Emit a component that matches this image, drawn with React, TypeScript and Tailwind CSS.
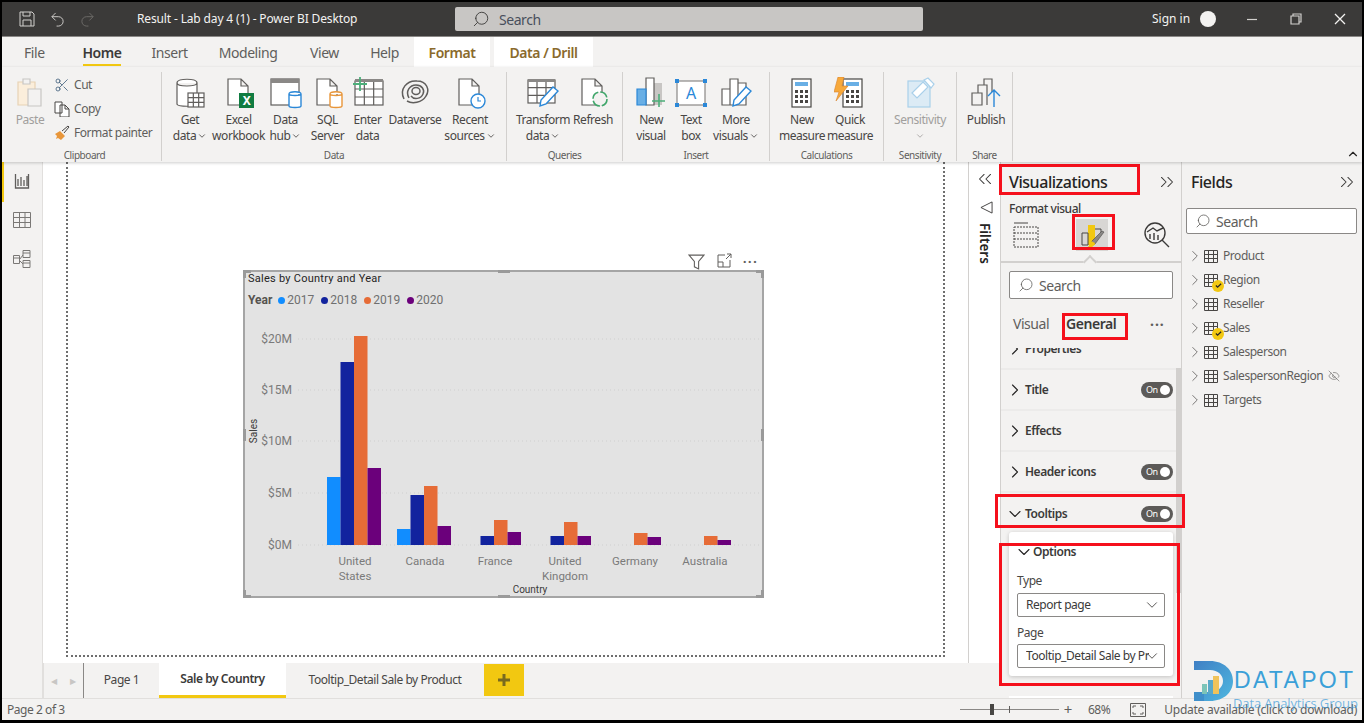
import type { ReactNode } from "react";
import { ChevronDown, ChevronRight, ChevronsLeft, ChevronsRight, ChevronUp, EyeOff, Scissors, Search } from "lucide-react";

const GREY = "#605e5c";

function Ico({ children, className = "w-[32px] h-[32px]" }: { children: ReactNode; className?: string }) {
  return (
    <svg viewBox="0 0 32 32" fill="none" stroke={GREY} strokeWidth="1.2" className={className}>
      {children}
    </svg>
  );
}

const Page = () => <path d="M5 2h13l7 7v19H5z M18 2v7h7" fill="#fff" />;

const Grid = ({ x, y, w, h }: { x: number; y: number; w: number; h: number }) => (
  <g>
    <rect x={x} y={y} width={w} height={h} fill="#fff" />
    <path d={`M${x} ${y + h / 3}h${w}M${x} ${y + (2 * h) / 3}h${w}M${x + w / 3} ${y}v${h}M${x + (2 * w) / 3} ${y}v${h}`} />
  </g>
);

const Pencil = () => <path d="M13 29l1-6L26 10l5 4-12 13z" fill="#fff" stroke="#2b88d8" strokeWidth="1.4" />;

const Calc = ({ x }: { x: number }) => (
  <g>
    <rect x={x} y="2" width="19" height="28" fill="#fff" stroke="#484644" />
    <rect x={x + 3} y="5" width="13" height="4" fill="#69afe5" stroke="none" />
    <path
      d={`M${x + 3} 13h3v3h-3zM${x + 8} 13h3v3h-3zM${x + 13} 13h3v3h-3zM${x + 3} 18h3v3h-3zM${x + 8} 18h3v3h-3zM${x + 13} 18h3v3h-3zM${x + 3} 23h3v3h-3zM${x + 8} 23h3v3h-3zM${x + 13} 23h3v3h-3z`}
      fill="#484644"
      stroke="none"
    />
  </g>
);

function Tool({ icon, lines, caret, w, dim }: { icon: ReactNode; lines: string[]; caret?: boolean; w: string; dim?: boolean }) {
  return (
    <div className={`flex flex-col items-center pt-[5px] ${w}`}>
      <div className="h-[32px]">{icon}</div>
      <div className={`mt-[3px] text-center text-[12px] leading-[16px] whitespace-nowrap ${dim ? "text-[#a19f9d]" : "text-[#484644]"}`}>
        {lines.map((l, i) => (
          <div key={l} className="flex h-[16px] items-center justify-center">
            {l}
            {caret && i === lines.length - 1 && <ChevronDown className="ml-[1px] h-[10px] w-[10px]" strokeWidth={2} />}
          </div>
        ))}
      </div>
    </div>
  );
}

function Group({ label, w, children }: { label: string; w: string; children: ReactNode }) {
  return (
    <div className={`mb-[1px] mt-[5px] flex flex-col border-r border-[#d2d0ce] ${w}`}>
      <div className="flex flex-1">{children}</div>
      <div className="text-center text-[10px] leading-[12px] text-[#605e5c]">{label}</div>
    </div>
  );
}

function Toggle() {
  return (
    <div className="flex h-[16px] w-[32px] items-center justify-between rounded-full bg-[#5c5a58] pl-[5px] pr-[3px]">
      <span className="text-[9px] leading-none text-white">On</span>
      <span className="h-[10px] w-[10px] rounded-full bg-white" />
    </div>
  );
}

function SearchBox({ className }: { className: string }) {
  return (
    <div className={`flex items-center gap-[5px] rounded-[2px] border border-[#8a8886] bg-white pl-[8px] ${className}`}>
      <Search className="h-[16px] w-[16px] -scale-x-100 text-[#605e5c]" strokeWidth={1.2} />
      <span className="text-[14px] text-[#605e5c]">Search</span>
    </div>
  );
}

function Section({ label, toggle, open }: { label: string; toggle?: boolean; open?: boolean }) {
  return (
    <div className={`flex h-[41px] shrink-0 items-center pl-[4px] pr-[3px] ${open ? "" : "border-t-2 border-[#ecebea]"}`}>
      {open ? (
        <ChevronDown className="h-[20px] w-[20px] text-[#252423]" strokeWidth={1.3} />
      ) : (
        <ChevronRight className="h-[20px] w-[20px] text-[#252423]" strokeWidth={1.3} />
      )}
      <span className="text-[12px] font-semibold text-[#3b3a39]">{label}</span>
      {toggle && (
        <div className="ml-auto">
          <Toggle />
        </div>
      )}
    </div>
  );
}

function Select({ text }: { text: string }) {
  return (
    <div className="relative h-[24px] rounded-[2px] border border-[#8a8886] bg-white pl-[8px] text-[12px] leading-[22px] whitespace-nowrap text-[#3b3a39]">
      <div className="mr-[15px] overflow-hidden">{text}</div>
      <span className="absolute right-[3px] top-0 flex h-full items-center">
        <ChevronDown className="h-[18px] w-[18px] text-[#484644]" strokeWidth={1.2} />
      </span>
    </div>
  );
}

function FieldRow({ name, used, hidden }: { name: string; used?: boolean; hidden?: boolean }) {
  return (
    <div className="flex h-[24px] items-center pl-[4px]">
      <ChevronRight className="h-[18px] w-[18px] text-[#605e5c]" strokeWidth={1.1} />
      <div className="relative h-[13px] w-[14px]">
        <svg viewBox="0 0 14 13" fill="none" stroke="#484644" className="h-[13px] w-[14px]">
          <path d="M.5.5h13v12H.5zM.5 4.5h13M.5 8.5h13M4.5.5v12M9.5.5v12" />
        </svg>
        {used && (
          <span className="absolute left-[8px] top-[6px] flex h-[12px] w-[12px] items-center justify-center rounded-full bg-[#f2c811]">
            <svg viewBox="0 0 8 8" fill="none" stroke="#252423" strokeWidth="1.4" className="h-[7px] w-[7px]">
              <path d="M1 4l2 2 4-4" />
            </svg>
          </span>
        )}
      </div>
      <span className="ml-[5px] text-[12px] text-[#605e5c]">{name}</span>
      {hidden && <EyeOff className="ml-[5px] h-[12px] w-[12px] text-[#605e5c]" strokeWidth={1.2} />}
    </div>
  );
}

const YEARS = [
  { y: "2017", c: "#118dff", dot: "bg-[#118dff]" },
  { y: "2018", c: "#12239e", dot: "bg-[#12239e]" },
  { y: "2019", c: "#e66c37", dot: "bg-[#e66c37]" },
  { y: "2020", c: "#6b007b", dot: "bg-[#6b007b]" },
];

// bar tops in page px, baseline is 545
const BARS: (number | null)[][] = [
  [477, 362, 336, 468],
  [529, 495, 486, 526],
  [null, 536, 520, 532],
  [null, 536, 522, 536],
  [null, null, 533, 537],
  [null, null, 536, 540],
];

const COUNTRIES = [["United", "States"], ["Canada"], ["France"], ["United", "Kingdom"], ["Germany"], ["Australia"]];

function Plot() {
  return (
    <svg viewBox="0 0 517 287" className="h-[287px] w-[517px]">
      <g transform="translate(-245 -309)">
        {[
          ["$20M", 339],
          ["$15M", 390],
          ["$10M", 441],
          ["$5M", 493],
          ["$0M", 545],
        ].map(([t, y]) => (
          <g key={t}>
            <line x1="298" x2="760" y1={y} y2={y} stroke="#cfcfcf" strokeDasharray="1 3" />
            <text x="292" y={Number(y) + 4} textAnchor="end" fontSize="12" fill="#7a7a7a">
              {t}
            </text>
          </g>
        ))}
        {BARS.map((g, i) =>
          g.map((top, j) =>
            top === null ? null : (
              <rect key={`${i}-${j}`} x={327 + i * 70 + j * 13.5} y={top} width="13.5" height={545 - top} fill={YEARS[j].c} />
            ),
          ),
        )}
        {COUNTRIES.map((lines, i) =>
          lines.map((l, k) => (
            <text key={l + i} x={355 + i * 70} y={565 + k * 15} textAnchor="middle" fontSize="11.5" fill="#7a7a7a">
              {l}
            </text>
          )),
        )}
        <text x="530" y="593" textAnchor="middle" fontSize="10" fill="#3b3a39">
          Country
        </text>
        <text transform="translate(257 431) rotate(-90)" textAnchor="middle" fontSize="10" fill="#3b3a39">
          Sales
        </text>
      </g>
    </svg>
  );
}

function Visual() {
  return (
    <div className="relative ml-[175px] h-[328px] w-[521px] border-2 border-[#a5a5a5] bg-[#e3e3e3] font-['Roboto',sans-serif] tracking-normal">
      <div className="absolute -top-[21px] right-[4px] flex items-center gap-[11px] text-[#605e5c]">
        <svg viewBox="0 0 16 16" fill="none" stroke="#605e5c" className="h-[17px] w-[17px]">
          <path d="M1 2h14L10 8v7l-4-2V8z" />
        </svg>
        <svg viewBox="0 0 16 16" fill="none" stroke="#605e5c" className="h-[16px] w-[16px]">
          <path d="M9 2H2v12h12V7M2 9h5v5M10 6l5-5M11 1h4v4" />
        </svg>
        <span className="mb-[6px] text-[14px] font-bold leading-none tracking-[1px]">...</span>
      </div>
      <div className="flex h-[15px] items-center pl-[3px] text-[11px] tracking-[0.25px] text-[#252423]">Sales by Country and Year</div>
      <div className="mt-[5px] flex h-[16px] items-center pl-[3px] text-[12px] text-[#6f6f6f]">
        <span className="mr-[6px] font-bold text-[#55534f]">Year</span>
        {YEARS.map((y) => (
          <span key={y.y} className="mr-[7px] flex items-center gap-[2px]">
            <span className={`h-[7px] w-[7px] rounded-full ${y.dot}`} />
            {y.y}
          </span>
        ))}
      </div>
      <div className="mt-[1px]">
        <Plot />
      </div>
      {/* resize handles */}
      <span className="absolute -top-[2px] left-[253px] h-[3px] w-[12px] bg-[#9a9a9a]" />
      <span className="absolute -bottom-[2px] left-[253px] h-[3px] w-[12px] bg-[#9a9a9a]" />
      <span className="absolute -left-[2px] top-[157px] h-[12px] w-[3px] bg-[#9a9a9a]" />
      <span className="absolute -right-[2px] top-[157px] h-[12px] w-[3px] bg-[#9a9a9a]" />
      <span className="absolute -left-[2px] -top-[2px] h-[8px] w-[8px] border-l-[3px] border-t-[3px] border-[#9a9a9a]" />
      <span className="absolute -right-[2px] -top-[2px] h-[8px] w-[8px] border-r-[3px] border-t-[3px] border-[#9a9a9a]" />
      <span className="absolute -bottom-[2px] -left-[2px] h-[8px] w-[8px] border-b-[3px] border-l-[3px] border-[#9a9a9a]" />
      <span className="absolute -bottom-[2px] -right-[2px] h-[8px] w-[8px] border-b-[3px] border-r-[3px] border-[#9a9a9a]" />
    </div>
  );
}

export default function App() {
  return (
    <div className="relative flex h-[723px] w-[1364px] flex-col overflow-hidden bg-black pb-[3px] pl-[2px] pr-[2px] pt-[2px] font-['Noto_Sans','Open_Sans',sans-serif] tracking-[-0.028em]">
      {/* title bar */}
      <div className="flex h-[35px] shrink-0 items-center border-b border-[#8a8886] bg-[#3b3a39] text-white">
        <div className="flex w-[135px] items-center pl-[17px]">
          <svg viewBox="0 0 16 16" fill="none" stroke="#d2d0ce" className="h-[16px] w-[16px]">
            <path d="M1 1h12l2 2v12H1zM4 1v4h7V1M4 15V9h8v6" />
          </svg>
          <svg viewBox="0 0 16 16" fill="none" stroke="#d2d0ce" className="ml-[15px] h-[15px] w-[15px]">
            <path d="M6 1L2 5l4 4M2 5h7a5 5 0 0 1 0 10H7" />
          </svg>
          <svg viewBox="0 0 16 16" fill="none" stroke="#6e6c6a" className="ml-[15px] h-[15px] w-[15px]">
            <path d="M10 1l4 4-4 4M14 5H7a5 5 0 0 0 0 10h2" />
          </svg>
        </div>
        <div className="w-[318px] text-[12px] tracking-[-0.012em] text-[#f3f2f1]">Result - Lab day 4 (1) - Power BI Desktop</div>
        <div className="flex h-[24px] w-[468px] items-center rounded-[2px] bg-[#c8c6c4] pl-[17px] text-[14px] text-[#484f5c]">
          <Search className="h-[18px] w-[18px] -scale-x-100 text-[#3b3a39]" strokeWidth={1.2} />
          <span className="ml-[9px]">Search</span>
        </div>
        <span className="ml-[229px] text-[12px] tracking-normal text-[#f3f2f1]">Sign in</span>
        <span className="ml-[10px] h-[16px] w-[16px] rounded-full bg-[#f3f2f1]" />
        <svg viewBox="0 0 12 12" fill="none" stroke="#d2d0ce" strokeWidth="1.2" className="ml-[30px] h-[12px] w-[12px]">
          <path d="M1 6.5h10" />
        </svg>
        <svg viewBox="0 0 12 12" fill="none" stroke="#d2d0ce" strokeWidth="1.2" className="ml-[32px] h-[12px] w-[12px]">
          <path d="M1 3h8v8H1zM3 3V1h8v8H9" />
        </svg>
        <svg viewBox="0 0 12 12" fill="none" stroke="#f3f2f1" strokeWidth="1.3" className="ml-[32px] h-[12px] w-[12px]">
          <path d="M1 1l10 10M11 1L1 11" />
        </svg>
      </div>

      {/* ribbon tabs */}
      <div className="flex h-[30px] shrink-0 items-stretch bg-[#f3f2f1] text-[14px] text-[#605e5c]">
        <span className="ml-[22px] flex w-[23px] items-center">File</span>
        <span className="relative ml-[36px] flex w-[38px] items-center justify-center font-semibold text-[#3b3a39]">
          Home
          <span className="absolute bottom-[1px] left-0 right-0 h-[2px] bg-[#f2c811]" />
        </span>
        <span className="ml-[31px] flex w-[35px] items-center justify-center">Insert</span>
        <span className="ml-[32px] flex w-[58px] items-center justify-center">Modeling</span>
        <span className="ml-[33px] flex w-[29px] items-center justify-center">View</span>
        <span className="ml-[31px] flex w-[29px] items-center justify-center">Help</span>
        <span className="ml-[15px] flex w-[76px] items-center justify-center bg-white font-semibold text-[#8a6a2c]">Format</span>
        <span className="ml-[4px] flex w-[99px] items-center justify-center bg-white font-semibold text-[#8a6a2c]">Data / Drill</span>
      </div>

      {/* ribbon */}
      <div className="relative z-10 flex h-[95px] shrink-0 items-stretch bg-[#f3f2f1] shadow-[0_1px_3px_rgba(0,0,0,0.2)]">
        <div className="mb-[1px] mt-[5px] flex w-[160px] flex-col border-r border-[#d2d0ce]">
          <div className="flex flex-1 pl-[10px]">
            <Tool
              w="w-[36px]"
              dim
              lines={["Paste"]}
              icon={
                <Ico>
                  <path d="M4 5h17v23H4z" fill="#fbeedb" stroke="#e8d2b4" />
                  <path d="M9 2h7v5H9z" fill="#f3f2f1" stroke="#c8c6c4" />
                  <path d="M14 12h13v17H14z" fill="#f3f2f1" stroke="#c8c6c4" />
                </Ico>
              }
            />
            <div className="ml-[6px] flex flex-col text-[12px] text-[#605e5c]">
              <div className="mt-[1px] flex h-[24px] items-center gap-[4px]">
                <Scissors className="h-[16px] w-[16px] text-[#3b5a78]" strokeWidth={1.2} />
                Cut
              </div>
              <div className="flex h-[24px] items-center gap-[4px]">
                <svg viewBox="0 0 16 16" fill="none" stroke="#484644" className="h-[16px] w-[16px]">
                  <path d="M1 1h7v11H1zM6 4h5l4 4v8H6zM11 4v4h4" fill="#fff" />
                </svg>
                Copy
              </div>
              <div className="flex h-[24px] items-center gap-[4px] whitespace-nowrap">
                <svg viewBox="0 0 16 16" fill="none" className="h-[16px] w-[16px]">
                  <path d="M1 9l5-3 5 5-4 4-3-2-2 1 1-3z" fill="#e8963a" />
                  <path d="M8 6l6-5 1 1-5 6" stroke="#484644" />
                </svg>
                Format painter
              </div>
            </div>
          </div>
          <div className="pl-[6px] text-center text-[10px] leading-[12px] text-[#605e5c]">Clipboard</div>
        </div>

        <Group label="Data" w="w-[345px] [&>div:first-child]:pl-[4px]">
          <Tool
            w="w-[48px]"
            caret
            lines={["Get", "data"]}
            icon={
              <Ico>
                <path d="M3 6c0-5 20-5 20 0v21c0 3-20 3-20 0zM3 6c0 4 20 4 20 0" fill="#fff" />
                <Grid x={14} y={16} w={16} h={14} />
              </Ico>
            }
          />
          <Tool
            w="w-[49px]"
            lines={["Excel", "workbook"]}
            icon={
              <Ico>
                <Page />
                <rect x="16" y="16" width="15" height="15" fill="#107c41" stroke="none" />
                <text x="23.5" y="28" textAnchor="middle" fontSize="12" fontWeight="700" fill="#fff" stroke="none">
                  X
                </text>
              </Ico>
            }
          />
          <Tool
            w="w-[45px]"
            caret
            lines={["Data", "hub"]}
            icon={
              <Ico>
                <rect x="1" y="2" width="28" height="26" fill="#fff" />
                <rect x="1" y="2" width="28" height="4" fill="#8a8886" stroke="none" />
                <path d="M19 17c0-3 12-3 12 0v12c0 2-12 2-12 0zM19 17c0 2 12 2 12 0" fill="#fff" stroke="#2b88d8" strokeWidth="1.4" />
              </Ico>
            }
          />
          <Tool
            w="w-[39px]"
            lines={["SQL", "Server"]}
            icon={
              <Ico>
                <Page />
                <path d="M18 17c0-3 12-3 12 0v12c0 2-12 2-12 0zM18 17c0 2 12 2 12 0" fill="#fff" stroke="#e8963a" strokeWidth="1.4" />
              </Ico>
            }
          />
          <Tool
            w="w-[41px]"
            lines={["Enter", "data"]}
            icon={
              <Ico>
                <Grid x={3} y={4} w={28} h={24} />
                <rect x="3" y="2" width="28" height="3" fill="#8a8886" stroke="none" />
                <path d="M8 0v14M1 7h14" stroke="#4caf7a" strokeWidth="1.8" />
              </Ico>
            }
          />
          <Tool
            w="w-[54px]"
            lines={["Dataverse"]}
            icon={
              <Ico>
                <path d="M5 22C0 12 8 3 18 4c10 0 13 9 9 15-4 7-14 8-19 5" strokeWidth="1.5" />
                <path d="M10 21c-4-7 1-13 7-13 6 0 9 5 7 9-2 5-9 6-12 2" strokeWidth="1.5" />
                <ellipse cx="17" cy="14" rx="4" ry="3.5" strokeWidth="1.5" />
              </Ico>
            }
          />
          <Tool
            w="w-[56px]"
            caret
            lines={["Recent", "sources"]}
            icon={
              <Ico>
                <Page />
                <circle cx="24" cy="24" r="7" fill="#fff" stroke="#2b88d8" strokeWidth="1.4" />
                <path d="M24 20v4h3" stroke="#2b88d8" />
              </Ico>
            }
          />
        </Group>

        <Group label="Queries" w="w-[116px] [&>div:first-child]:pl-[7px]">
          <Tool
            w="w-[58px]"
            caret
            lines={["Transform", "data"]}
            icon={
              <Ico>
                <Grid x={1} y={3} w={27} h={23} />
                <rect x="1" y="2" width="27" height="3" fill="#8a8886" stroke="none" />
                <Pencil />
              </Ico>
            }
          />
          <Tool
            w="w-[42px]"
            lines={["Refresh"]}
            icon={
              <Ico>
                <Page />
                <circle cx="23" cy="22" r="7" fill="#f3f2f1" stroke="#3fa66a" strokeWidth="1.6" strokeDasharray="9 2" />
              </Ico>
            }
          />
        </Group>

        <Group label="Insert" w="w-[147px] [&>div:first-child]:pl-[6px]">
          <Tool
            w="w-[44px]"
            lines={["New", "visual"]}
            icon={
              <Ico>
                <path d="M19 6h8v22h-8z" fill="#c8c6c4" stroke="none" />
                <path d="M11 1h8v27h-8z" fill="#fff" />
                <path d="M2 12h9v16H2z" fill="#69afe5" stroke="#2b88d8" />
                <path d="M24 17v13M17 24h13" stroke="#4caf7a" strokeWidth="1.6" />
              </Ico>
            }
          />
          <Tool
            w="w-[36px]"
            lines={["Text", "box"]}
            icon={
              <Ico>
                <rect x="2" y="4" width="28" height="24" fill="#fff" stroke="#8a8886" />
                <path d="M0 2h4v4H0zM28 2h4v4h-4zM0 26h4v4H0zM28 26h4v4h-4z" fill="#2b88d8" stroke="none" />
                <text x="16" y="22" textAnchor="middle" fontSize="16" fill="#2b88d8" stroke="none">
                  A
                </text>
              </Ico>
            }
          />
          <Tool
            w="w-[54px]"
            caret
            lines={["More", "visuals"]}
            icon={
              <Ico>
                <path d="M2 12h8v16H2zM10 2h8v26h-8zM18 6h8v22h-8z" fill="#fff" />
                <Pencil />
              </Ico>
            }
          />
        </Group>

        <Group label="Calculations" w="w-[114px] [&>div:first-child]:pl-[8px]">
          <Tool w="w-[48px]" lines={["New", "measure"]} icon={<Ico><Calc x={6} /></Ico>} />
          <Tool
            w="w-[48px]"
            lines={["Quick", "measure"]}
            icon={
              <Ico>
                <Calc x={9} />
                <path d="M10 0H4L0 15h5L2 24 14 9H8z" fill="#f7a93b" stroke="#d9822b" strokeWidth="0.6" />
              </Ico>
            }
          />
        </Group>

        <Group label="Sensitivity" w="w-[73px] [&>div:first-child]:pl-[1px]">
          <Tool
            w="w-[70px]"
            dim
            caret
            lines={["Sensitivity", ""]}
            icon={
              <Ico>
                <rect x="4" y="4" width="22" height="26" fill="#dcebf5" stroke="#a9d0ea" />
                <path d="M8 16L19 5l5 5-11 11z" fill="#fff" stroke="#a9d0ea" />
                <path d="M20 3l4-2 6 6-3 4z" fill="#fff" stroke="#a9d0ea" />
              </Ico>
            }
          />
        </Group>

        <Group label="Share" w="w-[56px] [&>div:first-child]:pl-[4px]">
          <Tool
            w="w-[50px]"
            lines={["Publish"]}
            icon={
              <Ico>
                <path d="M2 16h10v12H2zM8 16V8h9v20M14 8V2h8v13" />
                <path d="M24 30V14M18 19l6-6 6 6" stroke="#2b88d8" strokeWidth="1.4" />
              </Ico>
            }
          />
        </Group>

        <div className="ml-auto flex items-end pb-[1px] pr-[2px]">
          <ChevronUp className="h-[14px] w-[14px] text-[#252423]" strokeWidth={2} />
        </div>
      </div>

      {/* body */}
      <div className="flex min-h-0 flex-1 bg-[#f3f2f1]">
        <div className="relative flex w-[41px] shrink-0 flex-col items-center border-r border-[#e1dfdd] pt-[11px]">
          <span className="absolute left-0 top-0 h-[40px] w-[2px] bg-[#f2c811]" />
          <svg viewBox="0 0 16 16" fill="none" stroke="#605e5c" className="h-[16px] w-[16px]">
            <path d="M1.5 1v14h13V1M4 13V6M7 13V4M10 13V7M13 13V3" strokeWidth="1.3" />
          </svg>
          <svg viewBox="0 0 18 16" fill="none" stroke="#7a7876" className="mt-[23px] h-[16px] w-[18px]">
            <path d="M.5.5h17v15H.5zM.5 5.5h17M.5 10.5h17M6.5.5v15M12 .5v15" />
          </svg>
          <svg viewBox="0 0 18 18" fill="none" stroke="#7a7876" className="mt-[22px] h-[18px] w-[18px]">
            <path d="M.5 5.5h6v8h-6zM.5 8h6M10 .5h7v7h-7zM10 3h7M10 10.5h7v7h-7zM10 13h7M6.5 9.5L10 5M6.5 10.5L10 14" />
          </svg>
        </div>

        <div className="flex min-w-0 flex-1 flex-col">
          <div className="flex min-h-0 flex-1">
            <div className="min-w-0 flex-1 border-r border-[#d2d0ce] bg-white px-[23px] pb-[6px]">
              <div className="h-full border-2 border-t-0 border-dotted border-[#6e6e6e] pt-[108px]">
                <Visual />
              </div>
            </div>
            <div className="flex w-[32px] shrink-0 flex-col items-center border-r border-[#d2d0ce] bg-white pt-[6px]">
              <ChevronsLeft className="h-[22px] w-[22px] text-[#3b3a39]" strokeWidth={1.1} />
              <svg viewBox="0 0 14 14" fill="none" stroke="#3b3a39" className="ml-[3px] mt-[11px] h-[13px] w-[13px]">
                <path d="M13 1v12L1 7z" />
              </svg>
              <span className="mt-[9px] text-[13.5px] font-semibold tracking-normal text-[#252423] [writing-mode:vertical-rl]">Filters</span>
            </div>
          </div>
          {/* page tabs */}
          <div className="flex h-[35px] shrink-0 items-stretch text-[12px] text-[#484644]">
            <div className="flex w-[40px] items-center justify-center gap-[13px] border-l border-[#e1dfdd] text-[8px] text-[#c8c6c4]">
              <span>◀</span>
              <span>▶</span>
            </div>
            <div className="flex w-[76px] items-center justify-center border-l border-[#8a8886] pb-[1px]">Page 1</div>
            <div className="flex w-[127px] items-center justify-center border-b-[3px] border-[#f2c811] bg-white font-semibold text-[#3b3a39]">Sale by Country</div>
            <div className="flex w-[198px] items-center justify-center pb-[1px] whitespace-nowrap">Tooltip_Detail Sale by Product</div>
            <div className="mb-[2px] mt-[1px] flex w-[40px] items-center justify-center bg-[#f2c811]">
              <svg viewBox="0 0 12 12" stroke="#7a6a1f" strokeWidth="3" className="h-[12px] w-[12px]">
                <path d="M6 0v12M0 6h12" />
              </svg>
            </div>
          </div>
        </div>

        {/* visualizations */}
        <div className="flex w-[181px] shrink-0 flex-col border-r border-[#d2d0ce]">
          <div className="flex h-[40px] shrink-0 items-center justify-between pl-[8px] pr-[3px]">
            <span className="text-[16px] font-medium text-[#252423]">Visualizations</span>
            <ChevronsRight className="h-[22px] w-[22px] text-[#3b3a39]" strokeWidth={1.1} />
          </div>
          <div className="pl-[8px] text-[12px] font-medium leading-[14px] text-[#3b3a39]">Format visual</div>
          <div className="relative flex h-[47px] shrink-0 items-start border-b-2 border-[#d2d0ce]">
            <svg viewBox="0 0 26 26" fill="none" stroke="#484644" strokeDasharray="2 1" className="ml-[12px] mt-[6px] h-[26px] w-[26px]">
              <path d="M1 5h24v20H1zM1 11h24M1 17h24" />
              <path d="M1 1h14" strokeDasharray="none" />
            </svg>
            <div className="ml-[37px] mt-[3px] h-[32px] w-[32px] bg-[#d8d6d4]">
              <svg viewBox="0 0 32 32" fill="none" className="h-[32px] w-[32px]">
                <path d="M12 6h7v20h-7z" fill="#f2c811" />
                <path d="M6 14h6v12H6zM19 10h6v6" stroke="#484644" />
                <path d="M15 23l11-11 2 1-9 12z" fill="#8a8886" stroke="#484644" strokeWidth="0.6" />
                <path d="M11 29c4 0 7-1 8-5l-4-2c-1 3-2 5-4 7z" fill="#f2c811" />
              </svg>
            </div>
            <svg viewBox="0 0 26 26" fill="none" stroke="#3b3a39" strokeWidth="1.4" className="ml-[36px] mt-[6px] h-[26px] w-[26px]">
              <circle cx="11" cy="11" r="10" />
              <path d="M18 18l7 7M6 17v-5M10 18v-7M14 18v-5M3 10l6-4 4 3 6-3" />
            </svg>
            <span className="absolute -bottom-[6px] left-[84px] h-[10px] w-[10px] rotate-45 border-l-2 border-t-2 border-[#d2d0ce] bg-[#f3f2f1]" />
          </div>
          <SearchBox className="mx-[8px] mt-[8px] h-[28px] shrink-0" />
          <div className="flex h-[49px] shrink-0 items-center pl-[12px] text-[14px] text-[#605e5c]">
            <span className="w-[53px]">Visual</span>
            <span className="w-[48px] font-semibold text-[#3b3a39]">General</span>
            <span className="mb-[6px] ml-[36px] font-bold leading-none tracking-[1px]">...</span>
          </div>
          <div className="flex min-h-0 flex-1">
            <div className="min-w-0 flex-1 overflow-hidden">
              <div className="-mt-[21px]">
                <Section label="Properties" />
                <Section label="Title" toggle />
                <Section label="Effects" />
                <Section label="Header icons" toggle />
                <div className="border-t-2 border-[#ecebea]">
                  <Section label="Tooltips" toggle open />
                </div>
                <div className="ml-[8px] mr-[3px] -mt-[2px] h-[144px] rounded-[3px] bg-white px-[8px] pt-[12px] shadow-[0_1px_4px_rgba(0,0,0,0.2)]">
                  <div className="-ml-[3px] flex h-[16px] items-center">
                    <ChevronDown className="h-[20px] w-[20px] text-[#252423]" strokeWidth={1.3} />
                    <span className="-ml-[1px] text-[12px] font-semibold text-[#3b3a39]">Options</span>
                  </div>
                  <div className="mt-[13px] text-[12px] leading-[16px] text-[#484644]">Type</div>
                  <div className="mt-[4px]">
                    <Select text="Report page" />
                  </div>
                  <div className="mt-[8px] text-[12px] leading-[16px] text-[#484644]">Page</div>
                  <div className="mt-[3px]">
                    <Select text="Tooltip_Detail Sale by Product" />
                  </div>
                </div>
                <div className="ml-[8px] mr-[3px] mt-[20px] h-[40px] bg-white" />
              </div>
            </div>
            <div className="w-[5px] shrink-0">
              <div className="mt-[20px] h-[225px] bg-[#d2d0ce]" />
            </div>
          </div>
        </div>

        {/* fields */}
        <div className="flex w-[180px] shrink-0 flex-col">
          <div className="flex h-[39px] shrink-0 items-center justify-between pl-[9px] pr-[4px] pt-[1px]">
            <span className="text-[16px] font-medium text-[#252423]">Fields</span>
            <ChevronsRight className="h-[22px] w-[22px] text-[#3b3a39]" strokeWidth={1.1} />
          </div>
          <SearchBox className="ml-[4px] mr-[5px] mt-[7px] h-[26px] shrink-0" />
          <div className="mt-[10px]">
            <FieldRow name="Product" />
            <FieldRow name="Region" used />
            <FieldRow name="Reseller" />
            <FieldRow name="Sales" used />
            <FieldRow name="Salesperson" />
            <FieldRow name="SalespersonRegion" hidden />
            <FieldRow name="Targets" />
          </div>
        </div>
      </div>

      {/* status bar */}
      <div className="flex h-[22px] shrink-0 items-center border-t border-[#e1dfdd] bg-[#f3f2f1] pl-[5px] text-[12px] text-[#605e5c]">
        <span>Page 2 of 3</span>
        <div className="relative ml-auto mr-[5px] h-[1px] w-[99px] bg-[#8a8886]">
          <span className="absolute left-[30px] -top-[5px] h-[11px] w-[4px] bg-[#484644]" />
          <span className="absolute left-[49px] -top-[3px] h-[7px] w-[1px] bg-[#605e5c]" />
        </div>
        <span className="text-[15px] leading-none">+</span>
        <span className="ml-[16px]">68%</span>
        <svg viewBox="0 0 16 14" fill="none" stroke="#605e5c" className="ml-[20px] h-[14px] w-[16px]">
          <path d="M.5.5h15v13H.5zM3 5V3h3M10 3h3v2M13 9v2h-3M6 11H3V9" />
        </svg>
        <span className="ml-[18px] mr-[5px] whitespace-nowrap tracking-[-0.022em]">Update available (click to download)</span>
      </div>

      {/* DATAPOT watermark */}
      <div className="absolute left-[1193px] top-[661px] flex items-start tracking-normal">
        <svg viewBox="0 0 40 40" className="h-[40px] w-[40px]">
          <defs>
            <linearGradient id="dp" x1="0" y1="0" x2="1" y2="1">
              <stop offset="0" stopColor="#3f7fc4" />
              <stop offset="1" stopColor="#4fb8e0" />
            </linearGradient>
          </defs>
          <path d="M1 0h16c14 0 23 9 23 20s-9 20-23 20H1v-9h16c8 0 13-5 13-11S25 9 17 9H1z" fill="url(#dp)" />
          <path d="M1 31h10v9H1z" fill="#3f8fca" />
          <rect x="9" y="23" width="5" height="10" fill="#7cc4b8" />
          <rect x="15" y="19" width="5" height="14" fill="#5aa9c9" />
          <rect x="20" y="15" width="6" height="18" fill="#f0c35a" />
        </svg>
        <span className="ml-[1px] mt-[7px] font-['Liberation_Sans',sans-serif] text-[23px] leading-[24px] tracking-[2.3px] text-[#3aa0d8]">DATAPOT</span>
      </div>
      <span className="absolute left-[1233px] top-[694px] whitespace-nowrap font-['Open_Sans',sans-serif] text-[13px] tracking-[-0.01em] text-[#3a9ad9]/70">Data Analytics Group</span>

      {/* red annotation boxes */}
      <span className="absolute left-[999px] top-[164px] h-[31px] w-[141px] border-[3px] border-[#f5101c]" />
      <span className="absolute left-[1072px] top-[214px] h-[36px] w-[43px] border-[3px] border-[#f5101c]" />
      <span className="absolute left-[1062px] top-[313px] h-[27px] w-[66px] border-[3px] border-[#f5101c]" />
      <span className="absolute left-[995px] top-[494px] h-[34px] w-[190px] border-[3px] border-[#f5101c]" />
      <span className="absolute left-[999px] top-[543px] h-[143px] w-[181px] border-[3px] border-[#f5101c]" />
    </div>
  );
}
